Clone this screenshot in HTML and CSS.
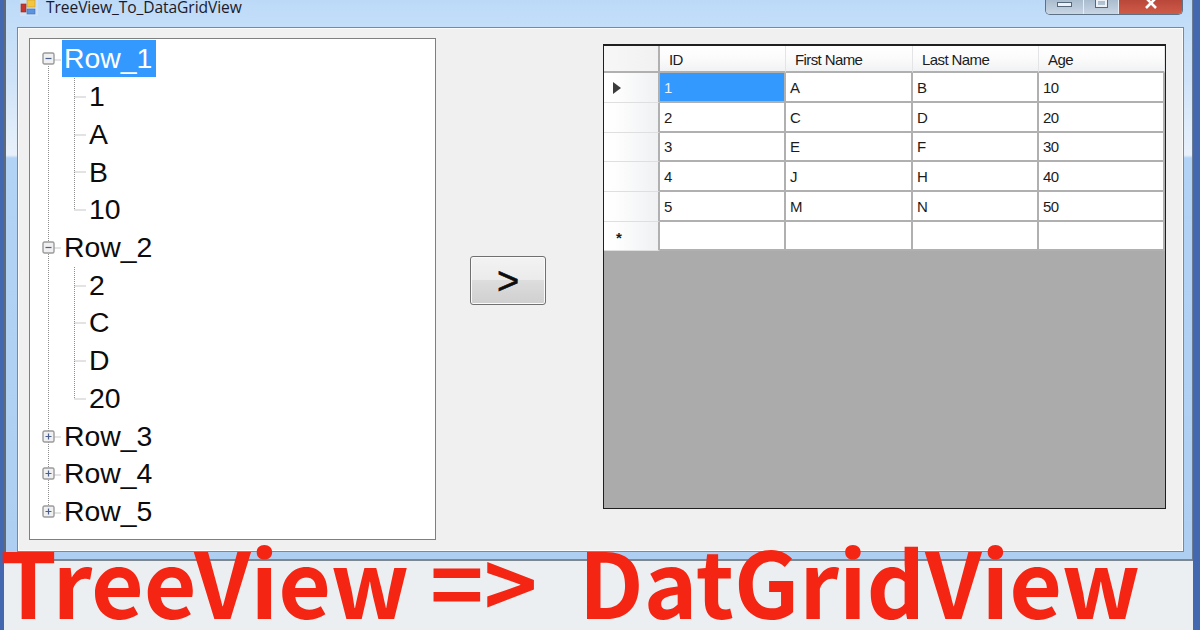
FILE: index.html
```html
<!DOCTYPE html>
<html lang="en">
<head>
<meta charset="utf-8">
<title>TreeView_To_DataGridView</title>
<link rel="stylesheet" href="styles.css">
</head>
<body>
<div class="stage">
  <div class="window">
    <div class="titlebar">
      <svg class="app-icon" width="18" height="16" viewBox="0 0 18 16"><rect x="0" y="0" width="18" height="16" fill="#dfe6ee" opacity=".5"/><rect x="7" y="0" width="8" height="7" fill="#f4c63f" stroke="#c99a2a" stroke-width=".6"/><rect x="1" y="4" width="5" height="8" fill="#c8352d" stroke="#8a2a26" stroke-width=".6"/><rect x="7" y="9" width="8" height="5" fill="#5d93dc" stroke="#3b6fb8" stroke-width=".6"/></svg>
      <span class="title">TreeView_To_DataGridView</span>
      <div class="caption-buttons">
        <div class="cap cap-min"><span class="min-glyph"></span></div>
        <div class="cap cap-max"><span class="max-glyph"></span></div>
        <div class="cap cap-close"><svg width="16" height="10" viewBox="0 0 16 10"><path d="M3 -2 L8 3 L13 -2 M8 3 L3 8 M8 3 L13 8" fill="none" stroke="#fff" stroke-width="2.6"/></svg></div>
      </div>
    </div>
    <div class="client">
      <div class="tree">
        <svg class="tree-lines" width="60" height="500" viewBox="0 0 60 500"><path d="M18.5 27V468M18.5 21H31M44.5 39V171M44.5 58H56M44.5 96H56M44.5 133H56M44.5 171H56M18.5 209H31M44.5 228V360M44.5 247H56M44.5 284H56M44.5 322H56M44.5 360H56M18.5 398H31M18.5 436H31M18.5 474H31" fill="none" stroke="#8e8e8e" stroke-width="1" stroke-dasharray="1 1"/></svg>
        <div class="node root"><svg class="exp" width="13" height="13" viewBox="0 0 13 13"><rect x="1" y="1" width="11" height="11" rx="1.5" fill="#f0f0f0" stroke="#9b9b9b" stroke-width="1.4"/><path d="M3.5 6.5H9.5" stroke="#4a5f8e" stroke-width="1.2"/></svg><span class="label selected">Row_1</span></div>
        <div class="node leaf"><span class="label">1</span></div>
        <div class="node leaf"><span class="label">A</span></div>
        <div class="node leaf"><span class="label">B</span></div>
        <div class="node leaf"><span class="label">10</span></div>
        <div class="node root"><svg class="exp" width="13" height="13" viewBox="0 0 13 13"><rect x="1" y="1" width="11" height="11" rx="1.5" fill="#f0f0f0" stroke="#9b9b9b" stroke-width="1.4"/><path d="M3.5 6.5H9.5" stroke="#4a5f8e" stroke-width="1.2"/></svg><span class="label">Row_2</span></div>
        <div class="node leaf"><span class="label">2</span></div>
        <div class="node leaf"><span class="label">C</span></div>
        <div class="node leaf"><span class="label">D</span></div>
        <div class="node leaf"><span class="label">20</span></div>
        <div class="node root"><svg class="exp" width="13" height="13" viewBox="0 0 13 13"><rect x="1" y="1" width="11" height="11" rx="1.5" fill="#f0f0f0" stroke="#9b9b9b" stroke-width="1.4"/><path d="M3.5 6.5H9.5M6.5 3.5V9.5" stroke="#4a5f8e" stroke-width="1.2"/></svg><span class="label">Row_3</span></div>
        <div class="node root"><svg class="exp" width="13" height="13" viewBox="0 0 13 13"><rect x="1" y="1" width="11" height="11" rx="1.5" fill="#f0f0f0" stroke="#9b9b9b" stroke-width="1.4"/><path d="M3.5 6.5H9.5M6.5 3.5V9.5" stroke="#4a5f8e" stroke-width="1.2"/></svg><span class="label">Row_4</span></div>
        <div class="node root"><svg class="exp" width="13" height="13" viewBox="0 0 13 13"><rect x="1" y="1" width="11" height="11" rx="1.5" fill="#f0f0f0" stroke="#9b9b9b" stroke-width="1.4"/><path d="M3.5 6.5H9.5M6.5 3.5V9.5" stroke="#4a5f8e" stroke-width="1.2"/></svg><span class="label">Row_5</span></div>
      </div>
      <div class="action"><button class="move-btn" type="button">&gt;</button></div>
      <div class="grid-view">
        <div class="dgv">
          <div class="c hdr corner"></div><div class="c hdr">ID</div><div class="c hdr">First Name</div><div class="c hdr">Last Name</div><div class="c hdr">Age</div>
          <div class="c rowhdr"><svg width="8" height="12" viewBox="0 0 8 12"><path d="M0 0L8 6L0 12Z" fill="#3c3c3c"/></svg></div><div class="c cell sel">1</div><div class="c cell">A</div><div class="c cell">B</div><div class="c cell">10</div>
          <div class="c rowhdr"></div><div class="c cell">2</div><div class="c cell">C</div><div class="c cell">D</div><div class="c cell">20</div>
          <div class="c rowhdr"></div><div class="c cell">3</div><div class="c cell">E</div><div class="c cell">F</div><div class="c cell">30</div>
          <div class="c rowhdr"></div><div class="c cell">4</div><div class="c cell">J</div><div class="c cell">H</div><div class="c cell">40</div>
          <div class="c rowhdr"></div><div class="c cell">5</div><div class="c cell">M</div><div class="c cell">N</div><div class="c cell">50</div>
          <div class="c rowhdr star">*</div><div class="c cell"></div><div class="c cell"></div><div class="c cell"></div><div class="c cell"></div>
        </div>
      </div>
    </div>
  </div>
  <div class="caption-text">TreeView =&gt;  DatGridView</div>
</div>
</body>
</html>
```
FILE: styles.css
```css
* { box-sizing: border-box; }
html, body { margin: 0; padding: 0; }
body { width: 1200px; height: 630px; overflow: hidden; background: #ebeff1; }

.stage {
  position: relative;
  width: 1200px;
  height: 630px;
  background: #ebeff1;
  border-left: 4px solid #4468b0;
  border-right: 7px solid #4468b0;
}

.window {
  height: 561px;
  display: flex;
  flex-direction: column;
  padding: 0 8px 7px 11px;
  background: linear-gradient(#bcdaf8 0, #c4def8 27px, #cfe3f8 80px, #e6f0fb 150px, #e8f1fb 155px, #b3d3f6 158px, #aecff2 100%);
  border-left: 2px solid #5e6a78;
  border-right: 1px solid #6b7c94;
  border-bottom: 2px solid #7d8790;
}

.titlebar {
  height: 27px;
  flex: none;
  display: flex;
  align-items: flex-start;
  padding-left: 3px;
}
.app-icon { flex: none; }
.title {
  margin-left: 8px;
  font: 15.6px/15px "Open Sans", "Noto Sans", sans-serif;
  color: #1a1a2a;
  letter-spacing: -0.08px;
}
.caption-buttons {
  margin-left: auto;
  margin-right: 1px;
  display: flex;
  height: 15px;
  border: 1px solid #5d7286;
  border-top: 0;
  border-radius: 0 0 5px 5px;
  overflow: hidden;
}
.cap { display: flex; align-items: flex-start; justify-content: center; height: 14px; }
.cap-min { width: 38px; background: linear-gradient(#a9bccf, #c9d6e3); border-right: 1px solid #e6eef5; }
.cap-max { width: 35px; background: linear-gradient(#a9bccf, #c9d6e3); border-right: 1px solid #e6eef5; }
.cap-close { width: 63px; background: linear-gradient(#b9483a, #cf5a48); }
.min-glyph { width: 15px; height: 5px; margin-top: 2px; background: #eef2f6; border: 1px solid #55677a; }
.max-glyph { width: 13px; height: 10px; margin-top: -2px; border: 3px solid #eef2f6; outline: 1px solid #55677a; outline-offset: -1px; }

.client {
  flex: 1;
  display: flex;
  align-items: flex-start;
  background: #f0f0f0;
  border: 1px solid #7f8890;
  box-shadow: inset 0 0 0 1px #fbfbfb;
  padding: 10px 17px 0 11px;
}

.tree {
  position: relative;
  flex: none;
  width: 407px;
  height: 502px;
  background: #fff;
  border: 1px solid #7f7f7f;
  padding-top: 1px;
  display: grid;
  grid-auto-rows: 37.72px;
  font: 28.4px/36px "Liberation Sans", Arial, sans-serif;
  color: #0c0c0c;
}
.tree-lines { position: absolute; left: 0; top: 0; }
.node { position: relative; display: flex; align-items: center; }
.root { padding-left: 12px; }
.root .label { margin-left: 7px; padding: 0 4px 0 2px; }
.leaf { padding-left: 56px; }
.label { display: block; padding: 0 3px; height: 37px; white-space: nowrap; }
.selected { background: #3399ff; color: #fff; }

.action {
  flex: none;
  width: 168px;
  padding: 218px 0 0 34px;
}
.move-btn {
  display: block;
  width: 76px;
  height: 49px;
  padding: 0;
  background: linear-gradient(#f3f3f3 0%, #ebebeb 48%, #dddddd 50%, #cfcfcf 100%);
  border: 1px solid #707070;
  border-radius: 3px;
  box-shadow: inset 0 0 0 1px #fafafa;
  font: 400 38px/1 "Liberation Sans", Arial, sans-serif;
  -webkit-text-stroke: 0.6px #0c0c0c;
  color: #0c0c0c;
}

.grid-view {
  flex: none;
  width: 563px;
  height: 465px;
  margin-top: 6px;
  margin-left: -1px;
  background: #ababab;
  border: 1px solid #1f1f1f;
  border-top-width: 2px;
}
.dgv {
  display: grid;
  grid-template-columns: 56px 126px 127px 126px 126px;
  grid-template-rows: 27px 30px 30px 29px 30px 30px 29px;
  font: 15px/1 "Liberation Sans", Arial, sans-serif;
  letter-spacing: -0.6px;
  color: #1c1c1c;
}
.c { display: flex; align-items: center; min-width: 0; }
.hdr {
  padding-left: 9px;
  padding-top: 2px;
  background: linear-gradient(#ffffff 0%, #fbfbfb 50%, #f1f2f4 100%);
  border-right: 1px solid #e3e4e6;
  border-bottom: 2px solid #b0b0b0;
}
.corner { border-right: 2px solid #b0b0b0; background: linear-gradient(90deg, #f7f7f7, #f1f1f1); }
.rowhdr {
  padding-left: 9px;
  background: linear-gradient(90deg, #ffffff 0%, #fdfdfd 25%, #eff1f3 100%);
  border-right: 2px solid #b0b0b0;
  border-bottom: 1px solid #dfdfdf;
}
.star { padding-left: 12px; font-weight: 700; padding-top: 2px; }
.cell {
  padding-left: 4px;
  background: #fff;
  border-right: 2px solid #b0b0b0;
  border-bottom: 2px solid #b0b0b0;
}
.sel { background: #3399ff; color: #e8f3ff; }

.caption-text {
  position: absolute;
  left: -4px;
  top: 534px;
  font: 700 91px/91px "Noto Sans CJK JP", "Noto Sans", sans-serif;
  color: #f42512;
  white-space: pre;
}
```
